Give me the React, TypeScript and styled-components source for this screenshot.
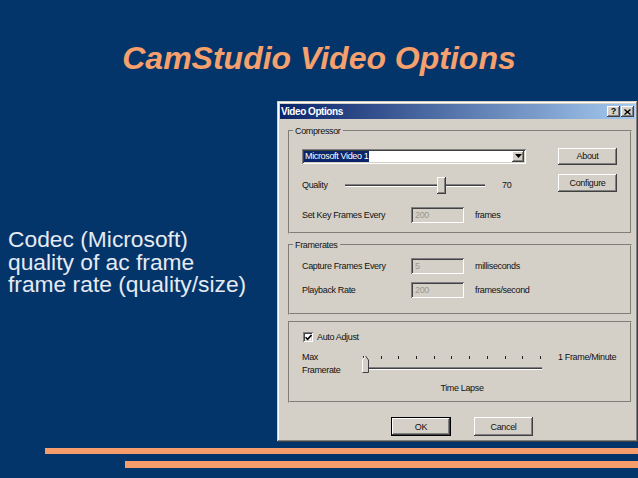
import React from "react";
import styled, { createGlobalStyle } from "styled-components";

const GlobalStyle = createGlobalStyle`
  html, body {
    margin: 0;
    padding: 0;
    background: #04356a;
  }
`;

const Slide = styled.div`
  width: 638px;
  height: 478px;
  overflow: hidden;
  background: #04356a;
  display: flex;
  flex-direction: column;
  font-family: "Liberation Sans", Arial, sans-serif;
`;

const Title = styled.h1`
  margin: 0;
  height: 101px;
  box-sizing: border-box;
  padding-top: 15px;
  display: flex;
  align-items: center;
  justify-content: center;
  font-size: 32px;
  font-weight: bold;
  font-style: italic;
  color: #f5a06d;
`;

const Main = styled.div`
  display: flex;
  height: 341px;
`;

const Bullets = styled.div`
  width: 277px;
  box-sizing: border-box;
  padding: 127px 0 0 8px;
  color: #e6eaf1;
  font-size: 22.8px;
  line-height: 22.5px;
  white-space: nowrap;
`;

const Rule = styled.div<{ $indent: number; $height: number; $gap: number }>`
  margin-left: ${(p) => p.$indent}px;
  margin-top: ${(p) => p.$gap}px;
  height: ${(p) => p.$height}px;
  background: #f69d6b;
`;

/* ---- Windows classic dialog ---- */

const raised = `
  box-shadow: inset -1px -1px #404040, inset 1px 1px #fff,
    inset -2px -2px #808080, inset 2px 2px #d4d0c8;
`;

const sunken = `
  box-shadow: inset 1px 1px #808080, inset -1px -1px #fff,
    inset 2px 2px #404040, inset -2px -2px #d4d0c8;
`;

const Dialog = styled.div`
  width: 361px;
  height: 341px;
  box-sizing: border-box;
  padding: 3px;
  background: #d4d0c8;
  box-shadow: inset -1px -1px #404040, inset 1px 1px #d4d0c8,
    inset -2px -2px #808080, inset 2px 2px #fff;
  display: flex;
  flex-direction: column;
  font-family: "Liberation Sans", Arial, sans-serif;
  font-size: 9px;
  letter-spacing: -0.35px;
  color: #111;
`;

const TitleBar = styled.div`
  height: 15px;
  display: flex;
  align-items: center;
  padding: 0 1px 0 1px;
  background: linear-gradient(to right, #0a246a, #a6caf0);
`;

const TitleText = styled.div`
  flex: 1;
  color: #fff;
  font-weight: bold;
  font-size: 10px;
  letter-spacing: -0.45px;
`;

const CaptionButton = styled.div`
  width: 13px;
  height: 11px;
  margin-left: 1px;
  background: #d4d0c8;
  ${raised}
  display: flex;
  align-items: center;
  justify-content: center;
  font-weight: bold;
  font-size: 9px;
  letter-spacing: 0;
  line-height: 1;
  color: #000;
`;

const Body = styled.div`
  flex: 1;
  display: flex;
  flex-direction: column;
  padding: 6px 3px 0 8px;
`;

const Group = styled.fieldset<{ $gap: number; $pad: string }>`
  margin: ${(p) => p.$gap}px 0 0 0;
  padding: ${(p) => p.$pad};
  border: 2px groove #d4d0c8;
  min-width: 0;
  display: flex;
  flex-direction: column;
`;

const Legend = styled.legend`
  margin-left: -9px;
  padding: 0 2px;
  line-height: 12px;
`;

const Row = styled.div<{ $height: number; $top?: number }>`
  display: flex;
  align-items: center;
  height: ${(p) => p.$height}px;
  margin-top: ${(p) => p.$top ?? 0}px;
`;

const Label = styled.div<{ $width?: number }>`
  width: ${(p) => (p.$width ? `${p.$width}px` : "auto")};
  flex: none;
  white-space: nowrap;
`;

const Unit = styled.div<{ $gap?: number }>`
  margin-left: ${(p) => p.$gap ?? 11}px;
  white-space: nowrap;
`;

const Button = styled.div<{ $width: number; $height: number; $default?: boolean }>`
  width: ${(p) => p.$width}px;
  height: ${(p) => p.$height}px;
  box-sizing: border-box;
  flex: none;
  display: flex;
  align-items: center;
  justify-content: center;
  background: #d4d0c8;
  ${raised}
  border: ${(p) => (p.$default ? "1px solid #000" : "none")};
`;

const SideButton = styled(Button)<{ $top?: boolean }>`
  margin-left: auto;
  align-self: ${(p) => (p.$top ? "flex-start" : "center")};
`;

const Combo = styled.div`
  width: 224px;
  height: 15px;
  box-sizing: border-box;
  padding: 2px;
  background: #fff;
  ${sunken}
  display: flex;
  align-items: center;
`;

const Selected = styled.span`
  background: #0a246a;
  color: #fff;
  padding: 0 1px;
  line-height: 11px;
`;

const ComboArrow = styled.div`
  margin-left: auto;
  width: 12px;
  height: 11px;
  background: #d4d0c8;
  ${raised}
  display: flex;
  align-items: center;
  justify-content: center;
`;

const TextBox = styled.div<{ $height: number }>`
  width: 53px;
  height: ${(p) => p.$height}px;
  box-sizing: border-box;
  flex: none;
  padding: 0 4px;
  display: flex;
  align-items: center;
  background: #d4d0c8;
  color: #9a9890;
  ${sunken}
`;

const Slider = styled.div<{ $width: number; $height: number }>`
  position: relative;
  width: ${(p) => p.$width}px;
  height: ${(p) => p.$height}px;
  flex: none;
`;

const Track = styled.div<{ $top: number }>`
  position: absolute;
  left: 0;
  right: 0;
  top: ${(p) => p.$top}px;
  height: 3px;
  box-sizing: border-box;
  border-top: 1px solid #808080;
  border-bottom: 1px solid #fff;
  background: #404040;
  background-clip: content-box;
`;

const RectThumb = styled.div`
  position: absolute;
  left: 92px;
  top: 3px;
  width: 9px;
  height: 17px;
  background: #d4d0c8;
  ${raised}
`;

const Ticks = styled.div`
  position: absolute;
  left: 1px;
  right: 1px;
  top: 5px;
  display: flex;
  justify-content: space-between;
`;

const Tick = styled.div`
  width: 1px;
  height: 3px;
  background: #222;
`;

const CheckRow = styled.div`
  display: flex;
  align-items: center;
  height: 12px;
  padding-left: 1px;
`;

const CheckBox = styled.div`
  width: 10px;
  height: 10px;
  box-sizing: border-box;
  margin-right: 4px;
  background: #fff;
  ${sunken}
  display: flex;
  align-items: center;
  justify-content: center;
`;

const TwoLine = styled.div`
  width: 60px;
  flex: none;
  line-height: 13px;
  align-self: flex-start;
`;

const EndLabel = styled.div`
  margin-left: 16px;
  align-self: flex-start;
  line-height: 13px;
  white-space: nowrap;
`;

const Caption = styled.div`
  margin: 4px 0 0 60px;
  width: 200px;
  text-align: center;
  line-height: 12px;
`;

const Actions = styled.div`
  display: flex;
  justify-content: center;
  gap: 23px;
  margin-top: 14px;
  padding-left: 4px;
`;

const CloseGlyph = () => (
  <svg width="7" height="6" viewBox="0 0 7 6">
    <path d="M0.5 0.5 L6.5 5.5 M6.5 0.5 L0.5 5.5" stroke="#000" strokeWidth="1.4" />
  </svg>
);

const DownGlyph = () => (
  <svg width="7" height="4" viewBox="0 0 7 4">
    <path d="M0 0 H7 L3.5 4 Z" fill="#000" />
  </svg>
);

const CheckGlyph = () => (
  <svg width="7" height="7" viewBox="0 0 7 7">
    <path d="M0.5 3.2 L2.6 5.4 L6.5 1" stroke="#000" strokeWidth="1.6" fill="none" />
  </svg>
);

const PointerThumb = () => (
  <svg width="7" height="18" viewBox="0 0 7 18" style={{ position: "absolute", left: 0, top: 4 }}>
    <path d="M0 18 V5 L3.5 0.5 L7 5 V18 Z" fill="#d4d0c8" />
    <path d="M0.5 17.5 V5 L3.5 1" stroke="#fff" fill="none" />
    <path d="M3.5 1 L6.5 5 V17.5 H0.5" stroke="#404040" fill="none" />
  </svg>
);

const VideoOptions: React.FC = () => {
  const ticks = Array.from({ length: 11 }, (_, i) => i);
  return (
    <Dialog>
      <TitleBar>
        <TitleText>Video Options</TitleText>
        <CaptionButton>?</CaptionButton>
        <CaptionButton>
          <CloseGlyph />
        </CaptionButton>
      </TitleBar>
      <Body>
        <Group $gap={0} $pad="10px 13px 9px 12px">
          <Legend>Compressor</Legend>
          <Row $height={18}>
            <Combo>
              <Selected>Microsoft Video 1</Selected>
              <ComboArrow>
                <DownGlyph />
              </ComboArrow>
            </Combo>
            <SideButton $width={59} $height={17}>About</SideButton>
          </Row>
          <Row $height={22} $top={9}>
            <Label $width={43}>Quality</Label>
            <Slider $width={140} $height={22}>
              <Track $top={10} />
              <RectThumb />
            </Slider>
            <Unit $gap={17}>70</Unit>
            <SideButton $width={59} $height={18} $top>
              Configure
            </SideButton>
          </Row>
          <Row $height={16} $top={11}>
            <Label $width={109}>Set Key Frames Every</Label>
            <TextBox $height={16}>200</TextBox>
            <Unit>frames</Unit>
          </Row>
        </Group>

        <Group $gap={5} $pad="7px 13px 15px 12px">
          <Legend>Framerates</Legend>
          <Row $height={16}>
            <Label $width={109}>Capture Frames Every</Label>
            <TextBox $height={16}>5</TextBox>
            <Unit>milliseconds</Unit>
          </Row>
          <Row $height={16} $top={8}>
            <Label $width={109}>Playback Rate</Label>
            <TextBox $height={16}>200</TextBox>
            <Unit>frames/second</Unit>
          </Row>
        </Group>

        <Group $gap={6} $pad="8px 13px 7px 12px">
          <CheckRow>
            <CheckBox>
              <CheckGlyph />
            </CheckBox>
            Auto Adjust
          </CheckRow>
          <Row $height={27} $top={8}>
            <TwoLine>
              Max
              <br />
              Framerate
            </TwoLine>
            <Slider $width={180} $height={27}>
              <Ticks>
                {ticks.map((t) => (
                  <Tick key={t} />
                ))}
              </Ticks>
              <Track $top={16} />
              <PointerThumb />
            </Slider>
            <EndLabel>1 Frame/Minute</EndLabel>
          </Row>
          <Caption>Time Lapse</Caption>
        </Group>

        <Actions>
          <Button $width={60} $height={19} $default>OK</Button>
          <Button $width={59} $height={19}>Cancel</Button>
        </Actions>
      </Body>
    </Dialog>
  );
};

export default function App() {
  return (
    <>
      <GlobalStyle />
      <Slide>
        <Title>CamStudio Video Options</Title>
        <Main>
          <Bullets>
            Codec (Microsoft)
            <br />
            quality of ac frame
            <br />
            frame rate (quality/size)
          </Bullets>
          <VideoOptions />
        </Main>
        <Rule $indent={45} $height={6} $gap={6} />
        <Rule $indent={125} $height={7} $gap={7} />
      </Slide>
    </>
  );
}
